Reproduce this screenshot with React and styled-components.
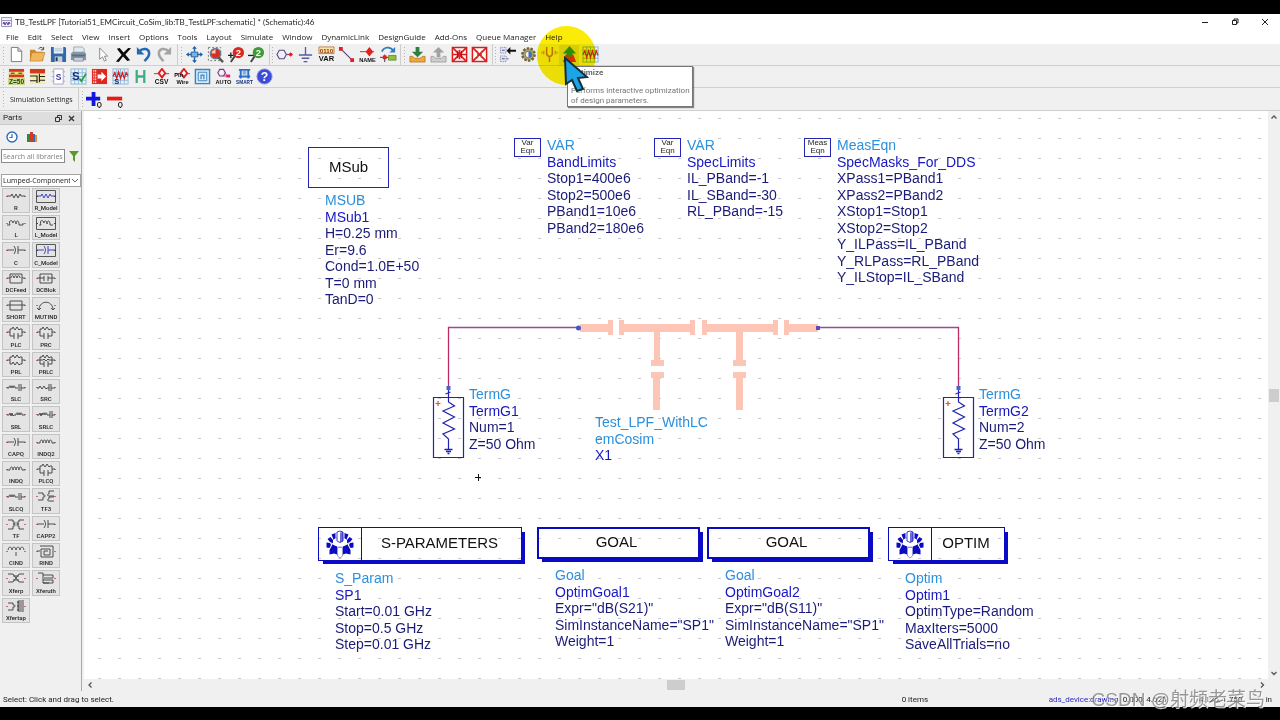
import React from "react";
import styled, { createGlobalStyle, css } from "styled-components";

const UI_FONT = 'Roboto, "Noto Sans", sans-serif';
const FIELD_FONT = '"Open Sans", "Noto Sans", sans-serif';
const TITLE_FONT = 'Lato, "Open Sans", sans-serif';
const SHEET_FONT = '"Liberation Sans", Arial, sans-serif';

const Global = createGlobalStyle`
  * { box-sizing: border-box; }
  body { margin: 0; background: #000; }
  button, input, select { font: inherit; color: inherit; margin: 0; }
`;

/* ---------- frame ---------- */

const Screen = styled.div`
  min-height: 100vh;
  padding: 14px 0 13px;
  display: flex;
  flex-direction: column;
  background: #000;
  font-family: ${UI_FONT};
  font-size: 8px;
  color: #1c1c1c;
`;

const AppWindow = styled.div`
  position: relative;
  flex: 1;
  display: flex;
  flex-direction: column;
  background: #f0f0f0;
`;

const TitleBar = styled.header`
  display: flex;
  align-items: center;
  height: 15px;
  padding-left: 1px;
  background: #fff;
`;

const Title = styled.h1`
  flex: 1;
  margin: 0 0 0 3px;
  font-family: ${TITLE_FONT};
  font-size: 8px;
  font-weight: 400;
  white-space: nowrap;
`;

const WindowButton = styled.button`
  width: 30px;
  height: 15px;
  padding: 0;
  border: 0;
  background: none;
  display: grid;
  place-items: center;
`;

const MenuBar = styled.nav`
  display: flex;
  align-items: center;
  gap: 9px;
  height: 15px;
  padding-left: 6px;
  background: #fff;
  font-family: ${FIELD_FONT};
`;

const MenuItem = styled.button`
  padding: 0;
  border: 0;
  background: none;
  line-height: 14px;
  white-space: nowrap;
`;

const ToolBar = styled.div`
  display: flex;
  height: ${(p) => (p.$last ? 23 : 22)}px;
  border-bottom: 1px solid #cfcfcf;
`;

const ToolGroup = styled.div`
  display: flex;
  align-items: center;
  height: 100%;
  padding-right: 2px;
  border-right: 1px solid ${(p) => (p.$open ? "transparent" : "#cdcdcd")};
`;

const Handle = styled.span`
  width: 1px;
  height: 16px;
  margin: 0 ${(p) => (p.$wide ? 2 : 1)}px 0 ${(p) => (p.$wide ? 3 : 2)}px;
  background: repeating-linear-gradient(#b4b4b4 0 1px, transparent 1px 3px);
`;

const ToolButton = styled.button`
  width: 20px;
  height: 20px;
  margin: 0 1px 0 0;
  padding: 0;
  border: 0;
  background: ${(p) => (p.$hot ? "#dedede" : "none")};
  display: grid;
  place-items: center;
  &:nth-of-type(3n) { margin-right: 0; }
`;

const ToolGap = styled.span`
  width: 3px;
`;

const ToolLabel = styled.button`
  padding: 0 3px 0 4px;
  border: 0;
  background: none;
  font-family: ${FIELD_FONT};
  font-size: 7px;
  white-space: nowrap;
`;

const Work = styled.div`
  flex: 1;
  display: flex;
`;

/* ---------- parts dock ---------- */

const Dock = styled.aside`
  flex: none;
  width: 82px;
  border-right: 1px solid #a9a9a9;
`;

const DockHead = styled.div`
  display: flex;
  align-items: center;
  height: 13px;
  margin-top: 1px;
  padding: 0 3px;
  background: #dedede;
  border-bottom: 1px solid #cacaca;
`;

const DockTitle = styled.h2`
  flex: 1;
  margin: 0;
  font-size: 8px;
  line-height: 12px;
  font-weight: 400;
`;

const IconButton = styled.button`
  width: ${(p) => p.$w || 13}px;
  padding: 0;
  border: 0;
  background: none;
  display: grid;
  place-items: center;
`;

const DockTools = styled.div`
  display: flex;
  align-items: center;
  height: 24px;
  padding: 0 2px;
`;

const SearchRow = styled.div`
  display: flex;
  align-items: center;
  gap: 3px;
  padding: 0 1px;
`;

const SearchBox = styled.input`
  width: 64px;
  height: 14px;
  padding: 0 1px;
  border: 1px solid #8a8a8a;
  background: #fff;
  font-family: ${FIELD_FONT};
  font-size: 7px;
  &::placeholder { color: #808080; opacity: 1; }
`;

const LibrarySelect = styled.select`
  display: block;
  width: 80px;
  height: 13px;
  margin: 11px 0 1px 1px;
  padding: 0 10px 0 1px;
  border: 1px solid #a4a4a4;
  border-radius: 0;
  appearance: none;
  font-family: ${FIELD_FONT};
  font-size: 7px;
  background: #fff url("data:image/svg+xml,%3Csvg xmlns='http://www.w3.org/2000/svg' width='8' height='6'%3E%3Cpath d='M1 1l3 3 3-3' fill='none' stroke='%23666'/%3E%3C/svg%3E") no-repeat right 1px center;
`;

const Palette = styled.div`
  display: grid;
  grid-template-columns: 28px 28px;
  grid-auto-rows: 25px 25px 26px;
  gap: 2px;
  padding-left: 2px;
`;

const PartButton = styled.button`
  display: flex;
  flex-direction: column;
  align-items: center;
  justify-content: space-between;
  padding: 1px 0 0;
  border: 1px solid #c4c4c4;
  background: #e4e4e4;
  font-family: Roboto, sans-serif;
  font-size: 6px;
  font-weight: 500;
  line-height: 8px;
  color: #222;
`;

/* ---------- schematic sheet ---------- */

const SheetFrame = styled.div`
  flex: 1;
  min-width: 0;
  margin-left: 2px;
  display: grid;
  grid-template: 1fr 12px / 1fr 12px;
`;

const Sheet = styled.main`
  position: relative;
  min-height: 560px;
  overflow: hidden;
  background: #fff
    url("data:image/svg+xml,%3Csvg xmlns='http://www.w3.org/2000/svg' width='20' height='20'%3E%3Cpath d='M14 7h3v1h-3z' fill='%23c8c8ce'/%3E%3C/svg%3E");
  font-family: ${SHEET_FONT};
`;

const ScrollBar = styled.div`
  display: flex;
  flex-direction: ${(p) => (p.$vertical ? "column" : "row")};
  align-items: center;
  justify-content: space-between;
  background: #f0f0f0;
`;

const ScrollThumb = styled.div`
  background: #cdcdcd;
  width: ${(p) => (p.$vertical ? 10 : 18)}px;
  height: ${(p) => (p.$vertical ? 13 : 10)}px;
`;

/* Everything placed on the sheet uses window coordinates; the sheet starts at 84,111. */
const ORIGIN_X = 84;
const ORIGIN_Y = 111;

const placed = css`
  position: absolute;
  left: ${(p) => p.$x - ORIGIN_X}px;
  top: ${(p) => p.$y - ORIGIN_Y}px;
`;

const Drawing = styled.svg`
  position: absolute;
  inset: 0;
  width: 100%;
  height: 100%;
`;

const Notes = styled.ul`
  ${placed}
  margin: 0;
  padding: 0;
  list-style: none;
  font-size: 14px;
  line-height: 16px;
  white-space: nowrap;
`;

const Note = styled.li`
  color: ${(p) => ({ type: "#2b90dd", name: "#1717c4", value: "#1b1b78" })[p.$kind]};
  &:nth-child(odd) { padding-bottom: 1px; }
`;

const Block = styled.div`
  ${placed}
  display: flex;
  width: ${(p) => p.$w}px;
  height: ${(p) => p.$h}px;
  border: ${(p) => p.$line || 1}px solid ${(p) => (p.$raised ? "#0a0ac0" : "#2323b4")};
  box-shadow: ${(p) => (p.$raised ? "4px 4px 0 -1px #0a0ac8" : "none")};
  font-size: 15px;
  color: #111;
`;

const BlockIcon = styled.span`
  flex: none;
  width: 43px;
  display: grid;
  place-items: center;
  border-right: 1px solid #0a0ac0;
`;

const BlockText = styled.span`
  flex: 1;
  display: grid;
  place-items: center;
  padding: ${(p) => (p.$raised ? "0 4px 4px 0" : "0 0 2px")};
`;

const EqnTag = styled.div`
  ${placed}
  width: 27px;
  height: 19px;
  border: 1px solid #2323b4;
  font-size: 8px;
  line-height: 8px;
  text-align: center;
  color: #222;
`;

/* ---------- status bar and overlays ---------- */

const StatusBar = styled.footer`
  display: flex;
  align-items: center;
  height: 16px;
  padding: 0 8px 0 3px;
  white-space: nowrap;
`;

const StatusCell = styled.span`
  flex: none;
  width: ${(p) => (p.$w ? p.$w + "px" : "auto")};
  color: ${(p) => (p.$blue ? "#2a2ac0" : "inherit")};
`;

const StatusFill = styled.span`
  flex: 1;
`;

const Watermark = styled.div`
  position: absolute;
  right: 15px;
  bottom: -5px;
  font-family: "Liberation Sans", "Noto Sans CJK SC", sans-serif;
  font-size: 19px;
  line-height: 24px;
  color: rgba(120, 120, 120, 0.75);
  text-shadow: 1px 1px 0 rgba(255, 255, 255, 0.8);
  pointer-events: none;
`;

const Spotlight = styled.div`
  position: absolute;
  left: 537px;
  top: 12px;
  width: 59px;
  height: 59px;
  border-radius: 50%;
  background: #faec08;
  mix-blend-mode: multiply;
  pointer-events: none;
`;

const Tooltip = styled.div`
  position: absolute;
  left: 567px;
  top: 52px;
  width: 126px;
  height: 41px;
  padding: 1px 3px;
  border: 1px solid #777;
  background: #fff;
  box-shadow: 1px 1px 1px rgba(0, 0, 0, 0.45);
  color: #747474;
  line-height: 10px;
  white-space: nowrap;
`;

const TooltipTitle = styled.strong`
  display: block;
  margin-bottom: 8px;
  font-weight: 700;
  color: #666;
`;

const BigCursor = styled.svg`
  position: absolute;
  left: 563px;
  top: 42px;
  pointer-events: none;
`;

/* ---------- toolbar icons, drawn on an 18 unit grid ---------- */

const T = ({ x = 9, y, s = 6, c = "#111", children }) => (
  <text x={x} y={y} fontSize={s} fontWeight="700" fontFamily="Liberation Sans, sans-serif" textAnchor="middle" fill={c}>
    {children}
  </text>
);

const DotGrid = () => (
  <g stroke="#8fb8d8" strokeWidth="1">
    <rect x="1" y="1" width="16" height="16" fill="#e8f3fa" />
    <path d="M5 1v16M9 1v16M13 1v16M1 5h16M1 9h16M1 13h16" fill="none" />
  </g>
);

const ICONS = {
  New: <path d="M3.500 1.500h7l4 4v11h-11zM10.500 1.500v4h4" fill="#fff" stroke="#777" />,
  Open: (
    <g>
      <path d="M1 4h5l2 2h7v10H1z" fill="#c98a2c" />
      <path d="M3 7h14l-3 9H1z" fill="#f0b75c" stroke="#b97c24" strokeWidth=".6" />
      <path d="M10 3c2-2 4-2 5 0M15.500 1v3h-3" fill="none" stroke="#444" />
    </g>
  ),
  Save: (
    <g>
      <path d="M1 1h15l1 1v15H1z" fill="#2f68ad" />
      <path d="M4 1h10v7H4z" fill="#e6eef6" />
      <path d="M5 3h8M5 5h8" stroke="#9ab" strokeWidth=".7" />
      <path d="M5 11h8v6H5z" fill="#c6ccd2" />
      <path d="M6 12h2v4H6z" fill="#234" />
    </g>
  ),
  Print: (
    <g>
      <path d="M4 1h9l2 2v5H4z" fill="#dfe9f2" stroke="#8a9aa8" strokeWidth=".8" />
      <path d="M1 8l2-2h12l2 2v7H1z" fill="#8797a6" />
      <path d="M2 9h14v2H2z" fill="#5d6d7c" />
      <path d="M4 12h10v4H4z" fill="#c7d0d8" stroke="#667" strokeWidth=".6" />
    </g>
  ),
  Pointer: <path d="M6 2v12l3-2.500 2 4.500 2-1-2-4.200h3.500z" fill="#fff" stroke="#888" />,
  Delete: <path d="M2 3l3-1 4 5 5-5 3 .5-6 6.500 5 6-3 1-4.500-5L4 17l-3-.5L7 9.500z" fill="#0c0c0c" />,
  Undo: (
    <g fill="none" stroke="#2468b4" strokeWidth="2.600">
      <path d="M4 6c5-5 11-3 11 2 0 4-3 6-5 8" />
      <path d="M2 1v8h8z" fill="#2468b4" stroke="none" />
    </g>
  ),
  Redo: (
    <g fill="none" stroke="#a4a4a4" strokeWidth="2.600">
      <path d="M14 6C9 1 3 3 3 8c0 4 3 6 5 8" />
      <path d="M16 1v8H8z" fill="#a4a4a4" stroke="none" />
    </g>
  ),
  "View all": (
    <g fill="#1f5fa0">
      <path d="M5.500 6.500h7v5h-7z" fill="#7db2e0" stroke="#1f5fa0" />
      <path d="M9 0l2.500 3h-5zM9 18l2.500-3h-5zM0 9l3-2.500v5zM18 9l-3-2.500v5z" />
      <path d="M9 2v4M9 12v4M2 9h4M12 9h4" stroke="#1f5fa0" strokeWidth="1.500" />
    </g>
  ),
  "Zoom area": (
    <g>
      <path d="M1.500 1.500h13v14h-13z" fill="none" stroke="#777" strokeDasharray="2 2" />
      <circle cx="9" cy="8" r="5.500" fill="#dc2c20" stroke="#6e7e90" strokeWidth="1.500" />
      <path d="M5 6l4-3v5H5z" fill="#f4c8c0" />
      <path d="M12 12l5 5" stroke="#555" strokeWidth="2.500" />
    </g>
  ),
  "Zoom in": (
    <g>
      <circle cx="11" cy="7" r="6" fill="#d42a20" />
      <path d="M7 11l-4 6" stroke="#444" strokeWidth="2" />
      <path d="M0 10h6M3 7v6" stroke="#222" strokeWidth="1.400" />
      <T x={11} y={10.5} s={10} c="#fff">2</T>
    </g>
  ),
  "Zoom out": (
    <g>
      <circle cx="11" cy="7" r="6" fill="#3f9a34" />
      <path d="M7 11l-4 6" stroke="#444" strokeWidth="2" />
      <path d="M0 10h6" stroke="#222" strokeWidth="1.400" />
      <T x={11} y={10.5} s={10} c="#fff">2</T>
    </g>
  ),
  "Insert pin": (
    <g fill="none" stroke="#5a4690" strokeWidth="1.200">
      <path d="M1 9l2.500-4.500h5L11 9l-2.500 4.500h-5z" />
      <path d="M11 9h4" />
      <path d="M13 9l2.500-2.500L18 9l-2.500 2.500z" fill="#e02020" stroke="none" />
    </g>
  ),
  "Insert ground": <path d="M9 1v8M2 9.500h14M5 13h8M7 16.500h4" fill="none" stroke="#5a5aa0" strokeWidth="1.400" />,
  "Insert VAR": (
    <g>
      <path d="M1 1h16v7H1z" fill="#f6e7a0" stroke="#b06a28" strokeWidth=".8" />
      <T y={7} s={6.5} c="#a03018">0110</T>
      <T y={16} s={8}>VAR</T>
    </g>
  ),
  "Insert wire": (
    <g>
      <path d="M3 3l12 12" stroke="#5a4690" strokeWidth="1.300" />
      <path d="M1 1h4v4H1zM13 13h4v4h-4z" fill="#e02020" />
    </g>
  ),
  "Insert wire label": (
    <g>
      <path d="M1 6h15" stroke="#e02020" />
      <path d="M7 6l4-5 4 5-4 5z" fill="#e02020" />
      <T y={17} s={6}>NAME</T>
    </g>
  ),
  Rotate: (
    <g>
      <path d="M2 6c2-5 9-6 12-1" fill="none" stroke="#2c7fc4" strokeWidth="2" />
      <path d="M16 1v6h-6z" fill="#2c7fc4" />
      <path d="M0 12h9M5 9v8" stroke="#333" />
      <path d="M3 10h4v4H3z" fill="#e02020" />
      <path d="M9 10h8v5H9z" fill="#8ec03c" stroke="#4a7a18" strokeWidth=".7" />
    </g>
  ),
  "Push into hierarchy": (
    <g>
      <path d="M7 1h4v5h4l-6 6-6-6h4z" fill="#2f8040" />
      <path d="M1 11h3l2 2h6l2-2h3v6H1z" fill="#f0a83c" stroke="#b0701c" strokeWidth=".8" />
    </g>
  ),
  "Pop out of hierarchy": (
    <g>
      <path d="M7 12h4V7h4L9 1 3 7h4z" fill="#a2a2a2" />
      <path d="M1 11h3l2 2h6l2-2h3v6H1z" fill="#cdcdcd" stroke="#969696" strokeWidth=".8" />
    </g>
  ),
  Deactivate: (
    <g stroke="#d81e1e">
      <path d="M1.500 1.500h15v15h-15z" fill="#fff" strokeWidth="1.600" />
      <path d="M2 2l14 14M16 2L2 16M2 9h14M9 4v10" strokeWidth="1.800" />
      <path d="M7 5v8M11 5v8" stroke="#8c1a1a" />
    </g>
  ),
  "Deactivate and short": (
    <g stroke="#d81e1e">
      <path d="M1.500 1.500h15v15h-15z" fill="#fff" strokeWidth="1.600" />
      <path d="M2 2l14 14M16 2L2 16" strokeWidth="1.800" />
      <path d="M7 5v8M11 5v8" stroke="#8c6a1a" />
    </g>
  ),
  "Simulation setup": (
    <g>
      <path d="M1.500 1.500h6v6h-6zM1.500 10.500h6v6h-6z" fill="#e4e4f2" stroke="#7878a8" strokeDasharray="1 1" />
      <path d="M3 4.500h3M3 13.500h3M8 13.500h2" stroke="#4a4a98" />
      <path d="M8 5l4-4v3h6v2h-6v3z" fill="#101010" />
    </g>
  ),
  Simulate: (
    <g>
      <circle cx="9" cy="9" r="6.500" fill="#b0a468" stroke="#6a6340" strokeWidth="2.600" strokeDasharray="2.500 1.500" />
      <circle cx="9" cy="9" r="3.500" fill="#f2f2f2" stroke="#555" strokeWidth=".7" />
      <path d="M9 5.500a3.500 3.500 0 010 7z" fill="#3a6fc0" />
    </g>
  ),
  Tune: (
    <g fill="none" stroke="#c07a10" strokeWidth="1.600">
      <path d="M6 1v7c0 4 6 4 6 0V1M9 11v6" />
      <path d="M3 5v4M15 5v4M1 6v2M17 6v2" strokeWidth="1" />
    </g>
  ),
  Optimize: (
    <g>
      <path d="M5 9h8l3 8H2z" fill="#e0302a" />
      <path d="M9 0l7 8h-4v3H6V8H2z" fill="#2f9a3c" />
    </g>
  ),
  "Data display": (
    <g>
      <DotGrid />
      <path d="M1 9l2-4 2 7 2-7 2 7 2-7 2 7 2-7 2 5" fill="none" stroke="#d02020" strokeWidth="1.200" />
    </g>
  ),
  "Line calculator": (
    <g>
      <path d="M1 1h16v9H1z" fill="#d23a1e" />
      <path d="M1 4h16v3H1z" fill="#f0e27a" />
      <path d="M3 5.500h4M11 5.500h4" stroke="#222" />
      <path d="M0 10h18v8H0z" fill="#cfd88a" />
      <T y={16.5} s={7} c="#1c4a1c">Z=50</T>
    </g>
  ),
  "Coupled line": (
    <g>
      <path d="M1 1h16v5H1z" fill="#d23a1e" />
      <path d="M1 6h16v11H1z" fill="#f2ecb0" />
      <path d="M1 8.500h7M8.500 8v8M1 13.500h7M11 6v9M11 9h6M11 13h6" fill="none" stroke="#222" strokeWidth="1.200" />
    </g>
  ),
  "S data": (
    <g>
      <path d="M4 1h10v16H4z" fill="#fff" stroke="#a8a0d0" />
      <path d="M2 4h2M2 9h2M2 14h2M14 4h2M14 9h2M14 14h2" stroke="#a8a0d0" />
      <T y={12.5} s={9} c="#3c3ca0">S</T>
    </g>
  ),
  "S check": (
    <g>
      <DotGrid />
      <T x={6} y={13} s={12} c="#17307c">S</T>
      <path d="M10 11l2 3 5-8" fill="none" stroke="#2a9a3a" strokeWidth="1.800" />
    </g>
  ),
  Export: (
    <g>
      <path d="M1 1h16v16H1z" fill="#e0261e" />
      <path d="M3 2v14M5 2v14" stroke="#fff" strokeDasharray="2 1" />
      <path d="M7 7h4V4l5 5-5 5v-3H7z" fill="#fff" />
    </g>
  ),
  "S wave": (
    <g>
      <DotGrid />
      <path d="M1 9l2-4 2 6 2-7 2 7 2-6 2 6 2-6 2 3" fill="none" stroke="#d02020" strokeWidth="1.300" />
      <T x={5} y={17} s={8} c="#17307c">S</T>
    </g>
  ),
  Harmonic: <path d="M5 2v14M13 2v14M5 9h8" fill="none" stroke="#3fae86" strokeWidth="2.400" />,
  "CSV import": (
    <g>
      <path d="M1 6h16" stroke="#e02020" />
      <path d="M6 5.500L9.500 1 13 5.500 9.500 10z" fill="#fff" stroke="#e02020" strokeWidth="2" />
      <T y={17} s={7}>CSV</T>
    </g>
  ),
  "Pin wire": (
    <g>
      <path d="M1 6h16" stroke="#e02020" />
      <path d="M7 5.500L10.500 1 14 5.500 10.500 10z" fill="#fff" stroke="#e02020" strokeWidth="2" />
      <T x={5} y={10} s={6}>Pin</T>
      <T y={17} s={6}>Wire</T>
    </g>
  ),
  Spiral: (
    <g fill="none" stroke="#3c84c0">
      <path d="M1.500 1.500h15v15h-15z" fill="#d8ebf8" strokeWidth="1.500" />
      <path d="M4.500 4.500h9v9h-9z" />
      <path d="M7.500 12V7.500h3V12" strokeWidth="1.300" />
    </g>
  ),
  "Auto label": (
    <g>
      <path d="M3 5l2-3.500h4L11 5 9 8.500H5z" fill="none" stroke="#7a3c90" strokeWidth="1.200" />
      <path d="M10 5l3 3M8 8l6 1" stroke="#d02060" />
      <path d="M12 7h4v3h-4z" fill="#e02060" />
      <T y={17} s={6}>AUTO</T>
    </g>
  ),
  "Smart mount": (
    <g>
      <path d="M3 2h12M3 9h12M5 1v10M13 1v10" stroke="#2c6cc8" strokeWidth="2" />
      <path d="M7 3h4v4H7z" fill="#7db2e0" />
      <T y={17} s={5} c="#17307c">SMART</T>
    </g>
  ),
  Help: (
    <g>
      <circle cx="9" cy="9" r="8" fill="#3c4cd8" stroke="#8890e4" />
      <T y={14} s={13} c="#fff">?</T>
    </g>
  ),
  "Add Q": (
    <g>
      <path d="M6 1h4v5h5v4h-5v6H6v-6H0V6h6z" fill="#1414e0" />
      <T x={14} y={17} s={7}>Q</T>
    </g>
  ),
  "Remove Q": (
    <g>
      <path d="M0 6h16v4H0z" fill="#e81c14" />
      <T x={14} y={17} s={7}>Q</T>
    </g>
  ),
};

const Icon = ({ name }) => (
  <svg width="17" height="17" viewBox="0 0 18 18" aria-hidden="true">
    {ICONS[name]}
  </svg>
);

const Tools = ({ names, hot }) =>
  names.map((n) => (
    <ToolButton key={n} aria-label={n} $hot={n === hot}>
      <Icon name={n} />
    </ToolButton>
  ));

/* ---------- part symbols, drawn on a 20 x 13 grid ---------- */

const RES = "M1 6h4l1-2 2 4 2-4 2 4 2-4 1 2h4";
const CAP = "M1 6h7M8 2c2 3 2 5 0 8M12 2v8M12 6h7";
const COIL = "M1 7h3c0-4 3-4 3 0 0-4 3-4 3 0 0-4 3-4 3 0 0-4 3-4 3 0h3";
const LOOP = "M1 6h3M16 6h3M4 3v7M16 3v7";
const WAVE_TOP = "M4 3h2l1-2 2 3 2-3 2 3 1-1h2";
const WAVE_LOW = "M4 10h2l1-2 2 3 2-3 2 3 1-1h2";
const CAP_LOW = "M4 10h4M8 7v6M12 7v6M12 10h4";

const PARTS = [
  ["R", RES],
  ["R_Model", RES, "model"],
  ["L", "M1 8h3c-2-5 2-6 3-2 0-3 3-3 3 1 0-4 3-4 3 0v1h4v-2"],
  ["L_Model", "M3 8h2c-2-5 2-6 3-2 0-3 3-3 3 1 0-4 3-4 3 0v1h3", "modelDark"],
  ["C", CAP],
  ["C_Model", CAP, "model"],
  ["DCFeed", "M1 6h3M16 6h3M4 2h12v9H4zM5 6c0-3 3-3 3 0 0-3 3-3 3 0 0-3 3-3 3 0"],
  ["DCBlok", "M1 6h7M12 6h7M4 2h12v9H4zM8 4v5M12 4v5"],
  ["SHORT", "M1 6h18M4 2h12v9H4z"],
  ["MUTIND", "M3 10c1-9 13-9 14 0M1 9l2 2 2-2M15 9l2 2 2-2"],
  ["PLC", `${LOOP}${WAVE_TOP}${CAP_LOW}`],
  ["PRC", `${LOOP}${WAVE_TOP}${CAP_LOW}`],
  ["PRL", `${LOOP}${WAVE_TOP}${WAVE_LOW}`],
  ["PRLC", `${LOOP}${WAVE_TOP}${CAP_LOW}M4 6h3l1-1 2 2 2-2 1 1h3`],
  ["SLC", "M1 7h2c0-3 2-3 2 0 0-3 2-3 2 0 0-3 2-3 2 0h3M13 3v7M15 3v7M15 7h4"],
  ["SRC", "M1 7h2l1-2 2 3 2-3 2 3 1-1h2M13 3v7M15 3v7M15 7h4"],
  ["SRL", "M1 7h2l1-2 1 3 1-3 1 3 1-1h2c0-3 2-3 2 0 0-3 2-3 2 0 0-3 2-3 2 0h3"],
  ["SRLC", "M1 7h2l1-2 1 3 1-3 1 2c0-3 2-3 2 0 0-3 2-3 2 0h3M14 3v7M16 3v7M16 7h3"],
  ["CAPQ", CAP],
  ["INDQ2", COIL],
  ["INDQ", COIL],
  ["PLCQ", `${LOOP}${WAVE_TOP}${CAP_LOW}`],
  ["SLCQ", "M1 7h2c0-3 2-3 2 0 0-3 2-3 2 0 0-3 2-3 2 0h3M13 3v7M15 3v7M15 7h4"],
  ["TF3", "M2 3h5v2c3 0 3 2 0 2v3H2M18 1h-5v3c-2 0-2 2 0 2h5M18 7h-5v2c-2 0-2 2 0 2h5"],
  ["TF", "M2 2h5v2c3 0 3 2 0 2 3 0 3 2 0 2v3H2M18 2h-5v2c-3 0-3 2 0 2-3 0-3 2 0 2v3h5"],
  ["CAPP2", CAP],
  ["CIND", "M2 5c1-4 3-4 4 0 1-4 3-4 4 0 1-4 3-4 4 0 1-4 3-4 4 0M10 7v4"],
  ["RIND", "M1 6h3M4 1h13v11H5V4h9v6H8V6h4"],
  ["Xferp", "M2 2h5l6 8h5M2 10h5l6-8h5M7 4h6M7 8h6"],
  ["Xferuth", "M2 1h5v10h6M7 3h10v3H8M7 8h10v3H7"],
  ["Xfertap", "M2 3h5v2c3 0 3 2 0 2v3H2M18 1h-6v2h6M18 5h-6v2h6M18 9h-6v2h6M12 1v10"],
];

const PartSymbol = ({ d, variant }) => (
  <svg width="20" height="13" viewBox="0 0 20 13" fill="none" aria-hidden="true">
    {variant && <path d="M.5.5h19v12H.5z" stroke="#555" />}
    <path d="M0 6.500h2M18 6.500h2" stroke={variant ? "#444" : "#c86a78"} />
    <path d={d} stroke={variant === "model" ? "#3434c0" : "#3c3c3c"} strokeWidth=".9" />
  </svg>
);

/* ---------- sheet content ---------- */

const NoteList = ({ x, y, lines, types = 1 }) => (
  <Notes $x={x} $y={y}>
    {lines.map((t, i) => (
      <Note key={t} $kind={i < types ? "type" : i === types ? "name" : "value"}>
        {t}
      </Note>
    ))}
  </Notes>
);

const Terminal = ({ x }) => (
  <g transform={`translate(${x} 0)`} fill="none" stroke="#2222b4">
    <path d="M-15 397.500h30v60h-30z" strokeWidth="1.200" />
    <path d="M0 388v14l6 4-11.500 5L6 417l-11.500 6L6 429l-11.500 5L0 439v10M-3 394l5-2" strokeWidth="1.200" />
    <path d="M-4 449.500h8M-2.500 451.500h5M-1 453.500h2" strokeWidth="1.500" />
    <path d="M-2 386h4v4h-4z" fill="#4464d4" stroke="none" />
    <path d="M-13 403.500h5M-10.500 401v5" stroke="#e0561c" strokeWidth="1.200" />
  </g>
);

const Circuit = () => (
  <Drawing aria-hidden="true">
    <g transform={`translate(${-ORIGIN_X} ${-ORIGIN_Y})`}>
      <g fill="none">
        <path d="M448 327.500h130M818 327.500h141" stroke="#94508e" strokeWidth="1.300" />
        <path d="M448.500 327v60M958.500 327v60" stroke="#bc2c64" strokeWidth="1.300" />
      </g>
      <g fill="#fcc5b6">
        <path d="M580 324h28v-4h5v15h-5v-3h-28z" />
        <path d="M619 320h5v4h66v-4h5v15h-5v-3h-30v28h4v6h-13v-6h3v-28h-30v3h-5z" />
        <path d="M702 320h5v4h66v-4h5v15h-5v-3h-30v28h3v6h-13v-6h3v-28h-29v3h-5z" />
        <path d="M784 320h5v4h29v8h-29v3h-5z" />
        <path d="M651 372h13v6h-4v32h-7v-32h-2zM733 372h13v6h-3v32h-7v-32h-3z" />
      </g>
      <circle cx="578.500" cy="328" r="2.500" fill="#3c58c8" />
      <path d="M816 326h4v4h-4z" fill="#5a4cb4" />
      <Terminal x={448.5} />
      <Terminal x={958.5} />
      <path d="M475 477.500h6M478.500 474v7" stroke="#111" />
    </g>
  </Drawing>
);

const Gear = () => (
  <svg width="30" height="30" viewBox="0 0 30 30" fill="#0a0ac0" aria-hidden="true">
    <path d="M6 13l4-4h10l4 4-3 5H9z" fill="#fff" stroke="#8a90d0" strokeWidth=".7" />
    <path d="M12 3l3-1 3 1v9l-3 1.500-3-1.500z" fill="#fff" stroke="#0a0ac0" strokeWidth=".8" />
    <path d="M15 3.500l3-.5v9l-3 1.500z" opacity=".6" />
    <path d="M6.500 5.500L10.500 4v5l-2 1.500zM23.500 5.500L19.500 4v5l2 1.500z" />
    <path d="M2.500 10l3-2 2.500 3v3l-3-1zM27.500 10l-3-2-2.500 3v3l3-1z" />
    <path d="M1.500 13.500L5 14l1 2-1.500 3-3-.5zM28.500 13.500L25 14l-1 2 1.500 3 3-.5z" />
    <path d="M4.500 21l3-5.500 4.500 2v8l-3-1-4.500 1zM25.500 21l-3-5.500-4.500 2v8l3-1 4.500 1z" />
    <path d="M12.500 18.500h5V27L15 29l-2.500-2z" fill="#fff" stroke="#7a80c4" strokeWidth=".8" />
  </svg>
);

const Chevron = ({ d }) => (
  <svg width="12" height="12" viewBox="0 0 12 12" fill="none" stroke="#555" strokeWidth="1.300" aria-hidden="true">
    <path d={d} />
  </svg>
);

const MENUS = [
  "File", "Edit", "Select", "View", "Insert", "Options", "Tools", "Layout", "Simulate",
  "Window", "DynamicLink", "DesignGuide", "Add-Ons", "Queue Manager", "Help",
];

export default function App() {
  return (
    <Screen>
      <Global />
      <AppWindow>
        <TitleBar>
          <svg width="11" height="10" viewBox="0 0 11 10" aria-hidden="true">
            <path d="M.5.5h10v9H.5z" fill="#eef" stroke="#99b" />
            <path d="M1 3.500h9" stroke="#99b" />
            <path d="M2 7l1-2 1 3 1.500-3L7 8l1-3 1 2" fill="none" stroke="#6a3a90" />
          </svg>
          <Title>TB_TestLPF [Tutorial51_EMCircuit_CoSim_lib:TB_TestLPF:schematic] * (Schematic):46</Title>
          <WindowButton aria-label="Minimize">
            <svg width="8" height="8"><path d="M1 4.500h6" stroke="#222" /></svg>
          </WindowButton>
          <WindowButton aria-label="Restore">
            <svg width="8" height="8" fill="none" stroke="#222"><path d="M1.500 2.500h4v4h-4zM3 2.500v-1.500h4v4h-1.500" /></svg>
          </WindowButton>
          <WindowButton aria-label="Close">
            <svg width="8" height="8"><path d="M1 1l6 6M7 1L1 7" stroke="#222" /></svg>
          </WindowButton>
        </TitleBar>

        <MenuBar>
          {MENUS.map((m) => (
            <MenuItem key={m}>{m}</MenuItem>
          ))}
        </MenuBar>

        <ToolBar>
          <ToolGroup>
            <Handle $wide />
            <Tools names={["New", "Open", "Save", "Print"]} />
            <ToolGap />
            <Tools names={["Pointer", "Delete", "Undo", "Redo"]} />
          </ToolGroup>
          <ToolGroup>
            <Handle $wide />
            <Tools names={["View all", "Zoom area", "Zoom in", "Zoom out"]} />
          </ToolGroup>
          <ToolGroup>
            <Handle />
            <Tools
              names={["Insert pin", "Insert ground", "Insert VAR", "Insert wire", "Insert wire label", "Rotate"]}
            />
          </ToolGroup>
          <ToolGroup>
            <Handle $wide />
            <Tools names={["Push into hierarchy", "Pop out of hierarchy", "Deactivate", "Deactivate and short"]} />
          </ToolGroup>
          <ToolGroup $open>
            <Handle />
            <Tools names={["Simulation setup", "Simulate", "Tune", "Optimize", "Data display"]} hot="Optimize" />
          </ToolGroup>
        </ToolBar>

        <ToolBar>
          <ToolGroup $open>
            <Handle $wide />
            <Tools
              names={[
                "Line calculator", "Coupled line", "S data", "S check", "Export", "S wave", "Harmonic",
                "CSV import", "Pin wire", "Spiral", "Auto label", "Smart mount", "Help",
              ]}
            />
          </ToolGroup>
        </ToolBar>

        <ToolBar $last>
          <ToolGroup>
            <Handle $wide />
            <ToolLabel>Simulation Settings</ToolLabel>
          </ToolGroup>
          <ToolGroup $open>
            <Handle $wide />
            <Tools names={["Add Q", "Remove Q"]} />
          </ToolGroup>
        </ToolBar>

        <Work>
          <Dock>
            <DockHead>
              <DockTitle>Parts</DockTitle>
              <IconButton aria-label="Float panel">
                <svg width="7" height="7" fill="none" stroke="#333"><path d="M.5 2.500h4v4h-4zM2.500 2V.5h4v4H5" /></svg>
              </IconButton>
              <IconButton aria-label="Close panel">
                <svg width="7" height="7"><path d="M1 1l5 5M6 1L1 6" stroke="#333" strokeWidth="1.300" /></svg>
              </IconButton>
            </DockHead>
            <DockTools>
              <IconButton $w={20} aria-label="History">
                <svg width="12" height="12" viewBox="0 0 12 12">
                  <circle cx="6" cy="6" r="5" fill="#fff" stroke="#2c6cb8" strokeWidth="1.400" />
                  <path d="M6 3v3.500H3.500" fill="none" stroke="#2c6cb8" strokeWidth="1.200" />
                </svg>
              </IconButton>
              <IconButton $w={20} aria-label="Libraries">
                <svg width="12" height="12" viewBox="0 0 12 12">
                  <path d="M1 3h3v8H1z" fill="#2c8a3c" />
                  <path d="M4 1h3v10H4z" fill="#d03a2a" />
                  <path d="M7 3h2v8H7z" fill="#3868b8" />
                  <path d="M9 4h2v7H9z" fill="#e0943a" />
                </svg>
              </IconButton>
            </DockTools>
            <SearchRow>
              <SearchBox type="text" aria-label="Search all libraries" placeholder="Search all libraries" />
              <IconButton $w={11} aria-label="Filter">
                <svg width="10" height="12" viewBox="0 0 10 12"><path d="M0 1h10L6 6v6l-2-2V6z" fill="#5a9a28" /></svg>
              </IconButton>
            </SearchRow>
            <LibrarySelect aria-label="Library">
              <option>Lumped-Components</option>
            </LibrarySelect>
            <Palette>
              {PARTS.map(([label, d, variant]) => (
                <PartButton key={label}>
                  <PartSymbol d={d} variant={variant} />
                  {label}
                </PartButton>
              ))}
            </Palette>
          </Dock>

          <SheetFrame>
            <Sheet>
              <Circuit />

              <Block $x={308} $y={147} $w={81} $h={41}>
                <BlockText>MSub</BlockText>
              </Block>
              <NoteList
                x={325}
                y={192}
                lines={["MSUB", "MSub1", "H=0.25 mm", "Er=9.6", "Cond=1.0E+50", "T=0 mm", "TanD=0"]}
              />

              <EqnTag $x={514} $y={138}>Var<br />Eqn</EqnTag>
              <NoteList
                x={547}
                y={137}
                lines={["VAR", "BandLimits", "Stop1=400e6", "Stop2=500e6", "PBand1=10e6", "PBand2=180e6"]}
              />

              <EqnTag $x={654} $y={138}>Var<br />Eqn</EqnTag>
              <NoteList x={687} y={137} lines={["VAR", "SpecLimits", "IL_PBand=-1", "IL_SBand=-30", "RL_PBand=-15"]} />

              <EqnTag $x={804} $y={138}>Meas<br />Eqn</EqnTag>
              <NoteList
                x={837}
                y={137}
                lines={[
                  "MeasEqn", "SpecMasks_For_DDS", "XPass1=PBand1", "XPass2=PBand2", "XStop1=Stop1",
                  "XStop2=Stop2", "Y_ILPass=IL_PBand", "Y_RLPass=RL_PBand", "Y_ILStop=IL_SBand",
                ]}
              />

              <NoteList x={469} y={386} lines={["TermG", "TermG1", "Num=1", "Z=50 Ohm"]} />
              <NoteList x={979} y={386} lines={["TermG", "TermG2", "Num=2", "Z=50 Ohm"]} />
              <NoteList x={595} y={414} types={2} lines={["Test_LPF_WithLC", "emCosim", "X1"]} />

              <Block $x={318} $y={527} $w={204} $h={34} $raised>
                <BlockIcon><Gear /></BlockIcon>
                <BlockText $raised>S-PARAMETERS</BlockText>
              </Block>
              <NoteList
                x={335}
                y={570}
                lines={["S_Param", "SP1", "Start=0.01 GHz", "Stop=0.5 GHz", "Step=0.01 GHz"]}
              />

              <Block $x={537} $y={527} $w={163} $h={32} $line={2} $raised>
                <BlockText $raised>GOAL</BlockText>
              </Block>
              <NoteList
                x={555}
                y={567}
                lines={["Goal", "OptimGoal1", 'Expr="dB(S21)"', 'SimInstanceName="SP1"', "Weight=1"]}
              />

              <Block $x={707} $y={527} $w={163} $h={32} $line={2} $raised>
                <BlockText $raised>GOAL</BlockText>
              </Block>
              <NoteList
                x={725}
                y={567}
                lines={["Goal", "OptimGoal2", 'Expr="dB(S11)"', 'SimInstanceName="SP1"', "Weight=1"]}
              />

              <Block $x={888} $y={527} $w={117} $h={34} $raised>
                <BlockIcon><Gear /></BlockIcon>
                <BlockText $raised>OPTIM</BlockText>
              </Block>
              <NoteList
                x={905}
                y={570}
                lines={["Optim", "Optim1", "OptimType=Random", "MaxIters=5000", "SaveAllTrials=no"]}
              />
            </Sheet>
            <ScrollBar $vertical>
              <Chevron d="M3.500 7.500L6 5l2.500 2.500" />
              <ScrollThumb $vertical />
              <Chevron d="M3.500 5L6 7.500 8.500 5" />
            </ScrollBar>
            <ScrollBar>
              <Chevron d="M7.500 3.500L5 6l2.500 2.500" />
              <ScrollThumb />
              <Chevron d="M5 3.500L7.500 6 5 8.500" />
            </ScrollBar>
          </SheetFrame>
        </Work>

        <StatusBar>
          <StatusCell>Select: Click and drag to select.</StatusCell>
          <StatusFill />
          <StatusCell $w={147}>0 items</StatusCell>
          <StatusCell $w={74} $blue>ads_device:drawing</StatusCell>
          <StatusCell $w={76}>0.000, 4.625</StatusCell>
          <StatusCell $w={67}>4.125, 1.750</StatusCell>
          <StatusCell>in</StatusCell>
        </StatusBar>

        <Spotlight />
        <Tooltip role="tooltip">
          <TooltipTitle>Optimize</TooltipTitle>
          Performs interactive optimization
          <br />
          of design parameters.
        </Tooltip>
        <BigCursor width="26" height="38" viewBox="0 0 26 38" aria-hidden="true">
          <path d="M2 2l1 26 6-4 5 11 6-2-5-11 9-1z" fill="#1ea4e6" stroke="#12303c" strokeWidth="2" />
        </BigCursor>
        <Watermark>CSDN @射频老菜鸟</Watermark>
      </AppWindow>
    </Screen>
  );
}
